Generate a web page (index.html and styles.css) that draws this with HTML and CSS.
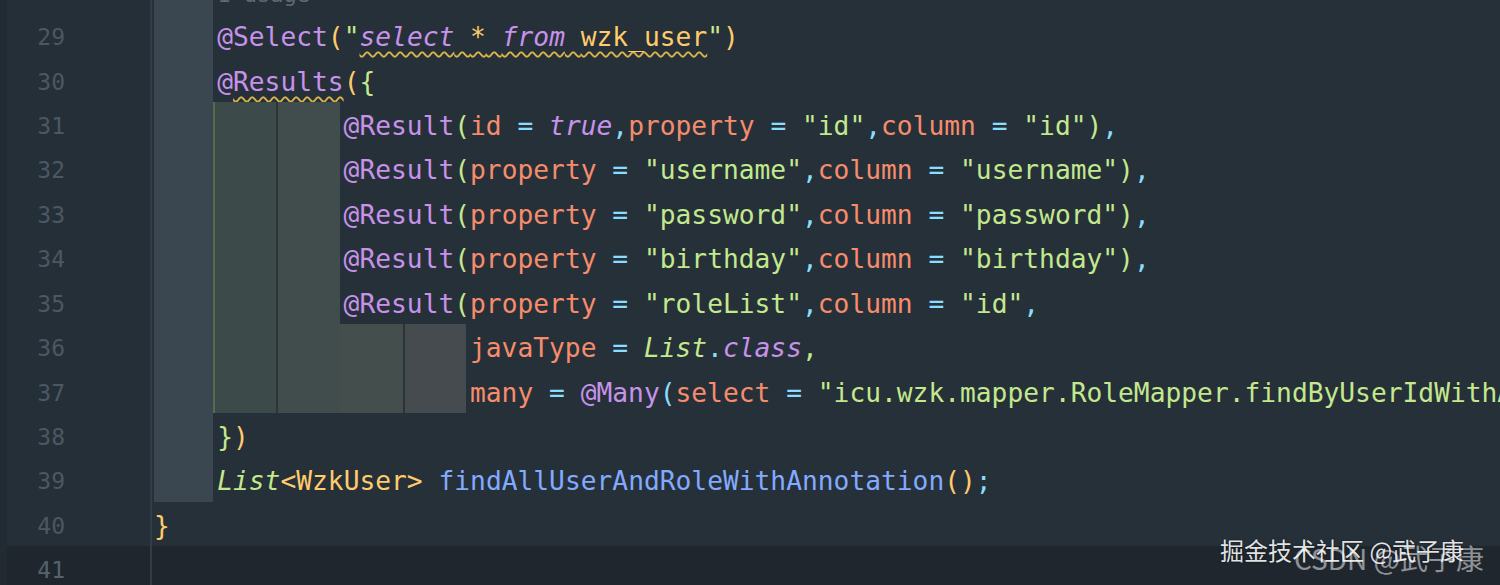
FILE: index.html
```html
<!DOCTYPE html>
<html lang="zh">
<head>
<meta charset="utf-8">
<title>WzkUserMapper</title>
<link rel="stylesheet" href="styles.css">
</head>
<body>
<div class="editor">
  <div class="row"><div class="ln"></div><div class="code"><span class="ind i1"></span><span class="t hint">1 usage</span></div></div>
  <div class="row"><div class="ln">29</div><div class="code"><span class="ind i1"></span><span class="t"><span class="an">@Select</span><span class="p1">(</span><span class="s">"</span><span class="sq"><span class="kw">select</span> <span class="ty it">*</span> <span class="kw">from</span> <span class="ty">wzk_user</span></span><span class="s">"</span><span class="p1">)</span></span></div></div>
  <div class="row"><div class="ln">30</div><div class="code"><span class="ind i1"></span><span class="t"><span class="an">@</span><span class="an sq">Results</span><span class="p1">(</span><span class="p2">{</span></span></div></div>
  <div class="row"><div class="ln">31</div><div class="code"><span class="ind i1"></span><span class="ind i2"></span><span class="ind i3"></span><span class="t"><span class="an">@Result</span><span class="p2">(</span><span class="pn">id</span> <span class="op">=</span> <span class="kw">true</span><span class="op">,</span><span class="pn">property</span> <span class="op">=</span> <span class="s">"id"</span><span class="op">,</span><span class="pn">column</span> <span class="op">=</span> <span class="s">"id"</span><span class="p2">)</span><span class="op">,</span></span></div></div>
  <div class="row"><div class="ln">32</div><div class="code"><span class="ind i1"></span><span class="ind i2"></span><span class="ind i3"></span><span class="t"><span class="an">@Result</span><span class="p2">(</span><span class="pn">property</span> <span class="op">=</span> <span class="s">"username"</span><span class="op">,</span><span class="pn">column</span> <span class="op">=</span> <span class="s">"username"</span><span class="p2">)</span><span class="op">,</span></span></div></div>
  <div class="row"><div class="ln">33</div><div class="code"><span class="ind i1"></span><span class="ind i2"></span><span class="ind i3"></span><span class="t"><span class="an">@Result</span><span class="p2">(</span><span class="pn">property</span> <span class="op">=</span> <span class="s">"password"</span><span class="op">,</span><span class="pn">column</span> <span class="op">=</span> <span class="s">"password"</span><span class="p2">)</span><span class="op">,</span></span></div></div>
  <div class="row"><div class="ln">34</div><div class="code"><span class="ind i1"></span><span class="ind i2"></span><span class="ind i3"></span><span class="t"><span class="an">@Result</span><span class="p2">(</span><span class="pn">property</span> <span class="op">=</span> <span class="s">"birthday"</span><span class="op">,</span><span class="pn">column</span> <span class="op">=</span> <span class="s">"birthday"</span><span class="p2">)</span><span class="op">,</span></span></div></div>
  <div class="row"><div class="ln">35</div><div class="code"><span class="ind i1"></span><span class="ind i2"></span><span class="ind i3"></span><span class="t"><span class="an">@Result</span><span class="p2">(</span><span class="pn">property</span> <span class="op">=</span> <span class="s">"roleList"</span><span class="op">,</span><span class="pn">column</span> <span class="op">=</span> <span class="s">"id"</span><span class="op">,</span></span></div></div>
  <div class="row"><div class="ln">36</div><div class="code"><span class="ind i1"></span><span class="ind i2"></span><span class="ind i3"></span><span class="ind i4"></span><span class="ind i5"></span><span class="t"><span class="pn">javaType</span> <span class="op">=</span> <span class="s it">List</span><span class="op">.</span><span class="kw">class</span><span class="s">,</span></span></div></div>
  <div class="row"><div class="ln">37</div><div class="code"><span class="ind i1"></span><span class="ind i2"></span><span class="ind i3"></span><span class="ind i4"></span><span class="ind i5"></span><span class="t"><span class="pn">many</span> <span class="op">=</span> <span class="an">@Many</span><span class="p3">(</span><span class="pn">select</span> <span class="op">=</span> <span class="s">"icu.wzk.mapper.RoleMapper.findByUserIdWithAnnotation"</span><span class="p3">)</span><span class="p2">)</span></span></div></div>
  <div class="row"><div class="ln">38</div><div class="code"><span class="ind i1"></span><span class="t"><span class="p2">}</span><span class="p1">)</span></span></div></div>
  <div class="row"><div class="ln">39</div><div class="code"><span class="ind i1"></span><span class="t"><span class="s it">List</span><span class="ty">&lt;WzkUser&gt;</span> <span class="fn">findAllUserAndRoleWithAnnotation</span><span class="p1">()</span><span class="op">;</span></span></div></div>
  <div class="row"><div class="ln">40</div><div class="code"><span class="t"><span class="p1">}</span></span></div></div>
  <div class="row current"><div class="ln">41</div><div class="code"><span class="t"></span></div></div>
</div>
<div class="watermark">
  <span class="wm-a">掘金技术社区 @武子康</span>
  <span class="wm-b">CSDN @武子康</span>
</div>
</body>
</html>
```

FILE: styles.css
```css
html, body {
  margin: 0;
  padding: 0;
}
body {
  width: 1500px;
  height: 585px;
  overflow: hidden;
  background: #263039;
  position: relative;
  font-family: "DejaVu Sans Mono", "Liberation Mono", monospace;
}
.editor {
  margin-top: -31.35px;
}
.row {
  display: flex;
  height: 44.45px;
  line-height: 44.45px;
  background: #263039;
}
.row.current {
  background: #1f262e;
}
.ln {
  flex: none;
  box-sizing: border-box;
  width: 152px;
  padding-top: 2px;
  border-left: 7px solid #222a32;
  border-right: 2px solid #333d47;
  padding-right: 85px;
  text-align: right;
  font-size: 23px;
  color: #4b5862;
  background: #252f38;
}
.row.current .ln {
  background: #1f262e;
  color: #56636d;
}
.code {
  flex: 1;
  display: flex;
  padding-left: 2px;
  white-space: pre;
  font-size: 26.25px;
  color: #b0bec5;
  overflow: hidden;
}
.ind {
  flex: none;
  width: 4ch;
  height: 100%;
}
.ind.i1 {
  width: calc(4ch - 4px);
  background: #3a4650;
}
.ind.i2 {
  background: #3c4a4a;
  box-shadow: inset 2px 0 0 #566b4c;
}
.ind.i3 {
  background: #404d4c;
  box-shadow: inset 2px 0 0 #2c3637;
}
.ind.i4 {
  background: #434e4d;
}
.ind.i5 {
  background: #464b4f;
  box-shadow: inset 2px 0 0 #2c3336;
}
.ind + .t {
  margin-left: 4px;
}
.t {
  flex: none;
  padding-top: 2px;
}
.hint {
  color: #5d6a74;
  font-size: 22px;
  margin-left: 6px;
  padding-top: 4px;
}
.an { color: #c792ea; }
.p1 { color: #ffcb6b; }
.p2 { color: #c3e88d; }
.p3 { color: #89ddff; }
.s { color: #c3e88d; }
.kw { color: #c792ea; font-style: italic; }
.op { color: #89ddff; }
.pn { color: #f78c6c; }
.ty { color: #ffcb6b; }
.fn { color: #82aaff; }
.it { font-style: italic; }
.sq {
  text-decoration: underline wavy #d9b24e;
  text-decoration-thickness: 1.5px;
  text-underline-offset: 5px;
}
.watermark {
  position: absolute;
  right: 0;
  bottom: 0;
  width: 290px;
  height: 60px;
  font-family: "Noto Sans CJK SC", "Noto Sans", sans-serif;
}
.wm-a {
  position: absolute;
  left: 10px;
  top: 10px;
  font-size: 24px;
  line-height: 30px;
  color: rgba(255, 255, 255, 0.88);
  white-space: nowrap;
  text-shadow: 0 0 2px rgba(0, 0, 0, 0.5);
}
.wm-b {
  position: absolute;
  left: 84px;
  top: 16px;
  font-size: 28px;
  line-height: 34px;
  color: rgba(255, 255, 255, 0.5);
  white-space: nowrap;
}
```
